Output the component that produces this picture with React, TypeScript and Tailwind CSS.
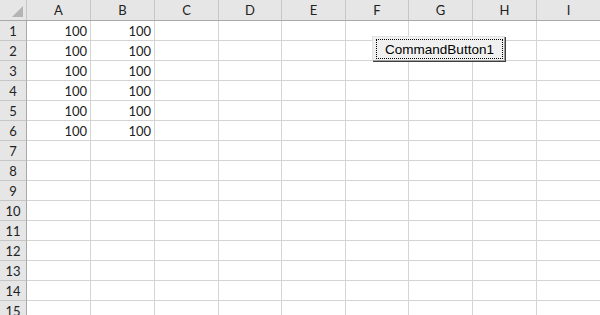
import React from "react";

const cols = [
  { l: "A", w: "w-[64px]" },
  { l: "B", w: "w-[64px]" },
  { l: "C", w: "w-[64px]" },
  { l: "D", w: "w-[63px]" },
  { l: "E", w: "w-[64px]" },
  { l: "F", w: "w-[63px]" },
  { l: "G", w: "w-[64px]" },
  { l: "H", w: "w-[64px]" },
  { l: "I", w: "w-[64px]" },
];

export default function App() {
  const rows = Array.from({ length: 15 }, (_, i) => i + 1);
  return (
    <div
      className="relative w-[600px] h-[315px] overflow-hidden bg-white text-[#222]"
      style={{ fontFamily: "Lato, 'Open Sans', sans-serif" }}
    >
      <div className="flex h-[21px] bg-[#e6e6e6] border-b border-[#a9a9a9]">
        <div className="w-[27px] h-full border-r border-[#c6c6c6] flex items-end justify-end pr-[3px] pb-[3px] shrink-0">
          <svg width="11" height="11" viewBox="0 0 11 11">
            <polygon points="11,0 11,11 0,11" fill="#b4b4b4" />
          </svg>
        </div>
        {cols.map((c) => (
          <div
            key={c.l}
            className={`${c.w} shrink-0 h-full border-r border-[#c6c6c6] flex items-center justify-center pt-[1px] text-[13px] leading-none`}
          >
            {c.l}
          </div>
        ))}
      </div>
      {rows.map((r) => (
        <div key={r} className="flex h-[20px]">
          <div className="w-[27px] shrink-0 h-full bg-[#e6e6e6] border-r border-b border-r-[#a9a9a9] border-b-[#c6c6c6] flex items-center justify-center pt-[2px] text-[13px] leading-none">
            {r}
          </div>
          {cols.map((c, ci) => (
            <div
              key={c.l}
              className={`${c.w} shrink-0 h-full border-r border-b border-[#d4d4d4] flex items-center justify-end pr-[3px] pt-[2px] text-[13px] leading-none`}
            >
              {ci < 2 && r <= 6 ? "100" : ""}
            </div>
          ))}
        </div>
      ))}
      <div className="absolute left-[372px] top-[36px] w-[133px] h-[25px] bg-[#f0f0f0] border-t border-l border-[#e3e3e3] shadow-[inset_-1px_-1px_0_#a0a0a0,1px_1px_0_#404040]">
        <div className="absolute left-[3px] top-[2px] right-[2px] bottom-[2px] border border-dotted border-black flex items-center justify-center pt-[2px]">
          <span
            className="text-[13.5px] leading-none text-black"
            style={{ fontFamily: "'Liberation Sans', Arial, sans-serif" }}
          >
            CommandButton1
          </span>
        </div>
      </div>
    </div>
  );
}
